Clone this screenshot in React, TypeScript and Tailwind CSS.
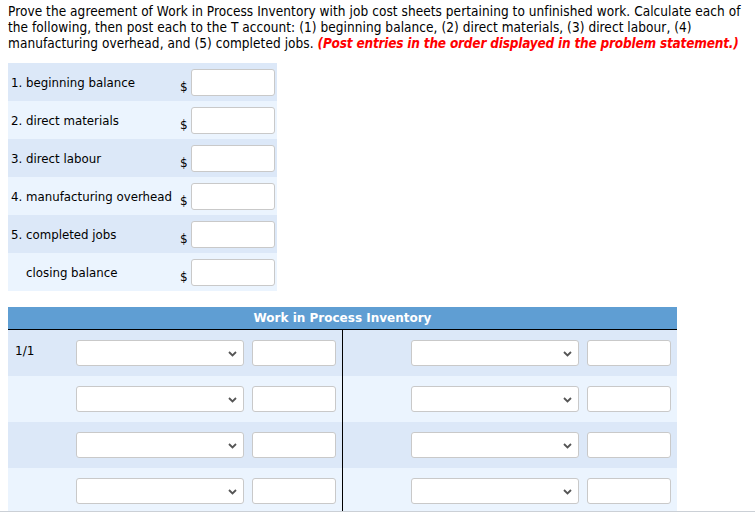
import React from 'react';

const verdana = { fontFamily: '"DejaVu Sans", Verdana, sans-serif' };

interface LineItem {
  label: string;
  indent?: boolean;
}

const items: LineItem[] = [
  { label: '1. beginning balance' },
  { label: '2. direct materials' },
  { label: '3. direct labour' },
  { label: '4. manufacturing overhead' },
  { label: '5. completed jobs' },
  { label: 'closing balance', indent: true },
];

const Chevron: React.FC = () => (
  <svg width="9" height="6" viewBox="0 0 9 6" className="absolute right-[6px] top-[10px]">
    <path d="M1 1 L4.5 4.5 L8 1" fill="none" stroke="#555" strokeWidth="1.8" />
  </svg>
);

const SelectBox: React.FC = () => (
  <div className="relative w-[168px] h-[26px] bg-white border border-[#c9c9c9] rounded-[3px]">
    <Chevron />
  </div>
);

const AmountBox: React.FC = () => (
  <div className="w-[84px] h-[26px] bg-white border border-[#c9c9c9] rounded-[3px]" />
);

const TSide: React.FC<{ label?: string; left?: boolean }> = ({ label, left }) => (
  <div className={`flex ${left ? 'border-r border-black w-[335px]' : 'w-[334px]'}`}>
    <div className="w-[68px] pl-[7px] pt-[12px] text-[12px] text-black">{label}</div>
    <div className="pt-[10px] flex gap-[8px]">
      <SelectBox />
      <AmountBox />
    </div>
  </div>
);

export default function App() {
  const tRows = [0, 1, 2, 3];

  return (
    <div className="w-[755px] h-[512px] overflow-hidden bg-white border-b border-[#cbd0d6]" style={verdana}>
      <p
        className="px-[8px] pt-[3px] text-[13.5px] leading-[16px] tracking-[0.06px] text-black whitespace-nowrap"
        style={{ fontFamily: '"DejaVu Sans Condensed", "DejaVu Sans", Tahoma, sans-serif' }}
      >
        Prove the agreement of Work in Process Inventory with job cost sheets pertaining to unfinished work. Calculate each of
        <br />
        the following, then post each to the T account: (1) beginning balance, (2) direct materials, (3) direct labour, (4)
        <br />
        manufacturing overhead, and (5) completed jobs.{' '}
        <span className="font-bold italic tracking-[-0.2px] text-[#ff0000]">
          (Post entries in the order displayed in the problem statement.)
        </span>
      </p>

      <div className="ml-[8px] mt-[12px] w-[269px]">
        {items.map((item, i) => (
          <div
            key={item.label}
            className={`flex h-[38px] ${i % 2 === 0 ? 'bg-[#dce8f8]' : 'bg-[#ebf4fe]'}`}
          >
            <div className={`w-[172px] shrink-0 pt-[12px] text-[11.8px] text-black whitespace-nowrap ${item.indent ? 'pl-[18px]' : 'pl-[3px]'}`}>
              {item.label}
            </div>
            <div className="self-end pb-[5px] text-[12px] text-black">$</div>
            <div className="ml-[3px] mt-[6px] w-[84px] h-[27px] bg-white border border-[#c9c9c9] rounded-[3px]" />
          </div>
        ))}
      </div>

      <div className="ml-[8px] mt-[16px] w-[669px]">
        <div className="h-[23px] bg-[#5f9ed3] border-b border-black flex items-center justify-center text-[12px] font-bold text-white">
          Work in Process Inventory
        </div>
        {tRows.map((r) => (
          <div key={r} className={`flex h-[46px] ${r % 2 === 0 ? 'bg-[#dce8f8]' : 'bg-[#ebf4fe]'}`}>
            <TSide left label={r === 0 ? '1/1' : undefined} />
            <TSide />
          </div>
        ))}
      </div>
    </div>
  );
}
